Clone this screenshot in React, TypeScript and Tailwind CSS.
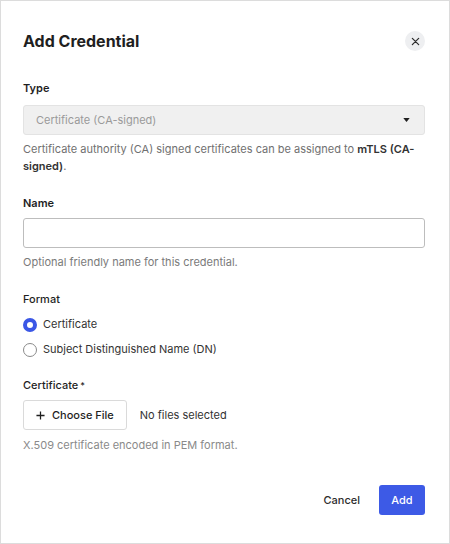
export default function App() {
  return (
    <div
      className="w-[450px] h-[544px] border border-[#dcdcdc] bg-white pl-[22px] pr-[24px] text-[#1f1f1f]"
      style={{ fontFamily: 'Inter, "Noto Sans", sans-serif' }}
    >
      {/* Header */}
      <div className="flex items-center justify-between pt-[29px]">
        <h1 className="text-[16px] font-bold leading-[22px]">Add Credential</h1>
        <button className="w-[20px] h-[20px] rounded-full bg-[#eeeff1] flex items-center justify-center">
          <svg width="9" height="9" viewBox="0 0 10 10" fill="none" stroke="#2d2d2d" strokeWidth="1.4" strokeLinecap="round">
            <path d="M1.5 1.5l7 7M8.5 1.5l-7 7" />
          </svg>
        </button>
      </div>

      {/* Type */}
      <div className="mt-[28px]">
        <div className="text-[11px] font-semibold leading-[17px]">Type</div>
        <div className="mt-[8px] h-[30px] rounded-[3px] border border-[#e3e3e3] bg-[#f0f0f0] flex items-center justify-between pl-[12px] pr-[14px]">
          <span className="text-[11px] text-[#9a9a9a]">Certificate (CA-signed)</span>
          <svg width="7" height="4" viewBox="0 0 8 5">
            <path d="M0 0h8L4 5z" fill="#1f1f1f" />
          </svg>
        </div>
        <p className="mt-[6px] text-[11px] leading-[17px] text-[#707070]">
          Certificate authority (CA) signed certificates can be assigned to <b className="font-semibold text-[#333]">mTLS (CA-signed)</b>.
        </p>
      </div>

      {/* Name */}
      <div className="mt-[20px]">
        <div className="text-[11px] font-semibold leading-[17px]">Name</div>
        <div className="mt-[6px] h-[30px] rounded-[3px] border border-[#bdbdbd] bg-white" />
        <p className="mt-[6px] text-[11px] leading-[17px] text-[#7a7a7a]">Optional friendly name for this credential.</p>
      </div>

      {/* Format */}
      <div className="mt-[20px]">
        <div className="text-[11px] font-medium leading-[17px]">Format</div>
        <div className="mt-[8px] flex items-center gap-[6px] h-[17px]">
          <span className="w-[14px] h-[14px] rounded-full border-[4px] border-[#3b57e6] bg-white" />
          <span className="text-[11px] text-[#333]">Certificate</span>
        </div>
        <div className="mt-[8px] flex items-center gap-[6px] h-[17px]">
          <span className="w-[14px] h-[14px] rounded-full border border-[#8a8a8a] bg-white" />
          <span className="text-[11px] text-[#333]">Subject Distinguished Name (DN)</span>
        </div>
      </div>

      {/* Certificate */}
      <div className="mt-[19px]">
        <div className="text-[11px] font-medium leading-[17px]">
          Certificate<span className="ml-[2px] text-[9px] align-top">*</span>
        </div>
        <div className="mt-[6px] flex items-center gap-[13px]">
          <button className="h-[30px] px-[12px] rounded-[3px] border border-[#dadada] bg-white flex items-center gap-[7px] text-[11px] font-medium">
            <svg width="9" height="9" viewBox="0 0 10 10" stroke="#1f1f1f" strokeWidth="1.4">
              <path d="M5 0.5v9M0.5 5h9" />
            </svg>
            Choose File
          </button>
          <span className="text-[11px] text-[#333]">No files selected</span>
        </div>
        <p className="mt-[7px] text-[11px] leading-[17px] text-[#8a8a8a]">X.509 certificate encoded in PEM format.</p>
      </div>

      {/* Footer */}
      <div className="mt-[31px] flex items-center justify-end gap-[19px]">
        <button className="text-[11px] font-medium text-[#2d2d2d]">Cancel</button>
        <button className="h-[30px] w-[46px] rounded-[3px] bg-[#3d5ae6] text-white text-[11px] font-medium">Add</button>
      </div>
    </div>
  );
}
